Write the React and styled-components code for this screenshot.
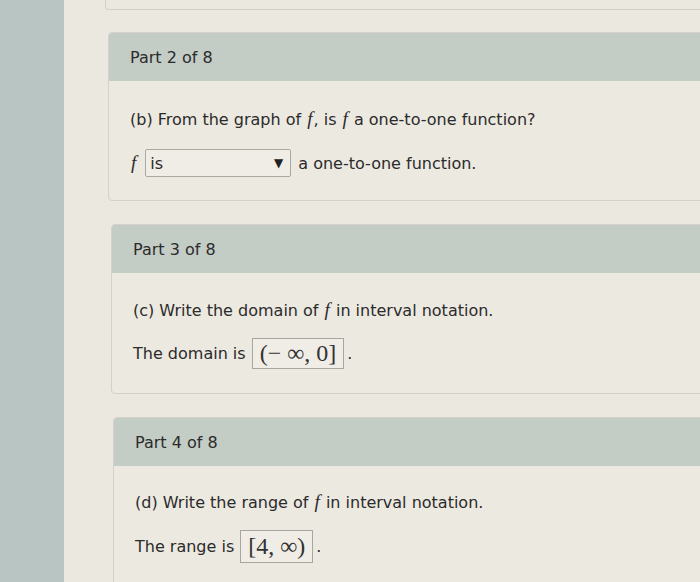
import styled, { createGlobalStyle } from "styled-components";

const Global = createGlobalStyle`
  html, body {
    margin: 0;
    padding: 0;
    background: #ebe8df;
  }
  body {
    font-family: "DejaVu Sans", Verdana, sans-serif;
    color: #2b2b2b;
  }
`;

const Page = styled.div`
  display: flex;
  width: 700px;
  height: 582px;
  overflow: hidden;
`;

const Strip = styled.div`
  width: 64px;
  flex-shrink: 0;
  background: #b8c5c3;
`;

const Main = styled.div`
  flex: 1;
  display: flex;
  flex-direction: column;
  padding-left: 44px;
  margin-right: -20px;
`;

const PrevCard = styled.div`
  flex-shrink: 0;
  height: 9px;
  border: 1px solid #d2d0c8;
  border-top: none;
  border-radius: 0 0 4px 4px;
  margin-left: -3px;
`;

const Card = styled.section`
  flex-shrink: 0;
  margin-left: ${(p) => p.$indent || 0}px;
  margin-top: ${(p) => p.$gap}px;
  border: 1px solid #d3d1ca;
  border-radius: 4px;
  background: #ece9e1;
  overflow: hidden;
`;

const Header = styled.div`
  height: 48px;
  background: #c4ccc6;
  display: flex;
  align-items: center;
  padding-left: 21px;
  font-size: 16px;
`;

const Body = styled.div`
  height: ${(p) => p.$h}px;
  padding: 0 21px;
  display: flex;
  flex-direction: column;
`;

const Question = styled.p`
  margin: ${(p) => p.$top}px 0 0;
  font-size: 16px;
  line-height: 20px;
`;

const Row = styled.div`
  margin-top: ${(p) => p.$top}px;
  display: flex;
  align-items: center;
  font-size: 16px;
`;

const F = styled.span`
  font-family: "Liberation Serif", "DejaVu Serif", serif;
  font-style: italic;
  font-size: 19px;
  padding: 0 1px;
`;

const Select = styled.div`
  width: 146px;
  height: 28px;
  box-sizing: border-box;
  border: 1px solid #a9a9a4;
  border-radius: 2px;
  background: #efede6;
  display: flex;
  align-items: center;
  justify-content: space-between;
  padding: 0 7px 0 4px;
  margin: 0 7px 0 8px;
`;

const Arrow = styled.span`
  font-size: 12px;
  color: #222;
`;

const MathBox = styled.span`
  display: inline-flex;
  align-items: center;
  height: ${(p) => p.$h}px;
  box-sizing: border-box;
  padding: 0 7px;
  margin: 0 3px 0 6px;
  border: 1px solid #a7a7a2;
  background: #efede6;
  font-family: "Liberation Serif", "DejaVu Serif", serif;
  font-size: 24px;
  color: #333;
`;

export default function App() {
  return (
    <>
      <Global />
      <Page>
        <Strip />
        <Main>
          <PrevCard />
          <Card $gap={22}>
            <Header>Part 2 of 8</Header>
            <Body $h={119}>
              <Question $top={28}>
                (b) From the graph of <F>f</F>, is <F>f</F> a one-to-one function?
              </Question>
              <Row $top={19}>
                <F>f</F>
                <Select>
                  <span>is</span>
                  <Arrow>▼</Arrow>
                </Select>
                a one-to-one function.
              </Row>
            </Body>
          </Card>
          <Card $gap={23} $indent={3}>
            <Header>Part 3 of 8</Header>
            <Body $h={120}>
              <Question $top={27}>
                (c) Write the domain of <F>f</F> in interval notation.
              </Question>
              <Row $top={17}>
                The domain is
                <MathBox $h={31}>(− ∞, 0]</MathBox>.
              </Row>
            </Body>
          </Card>
          <Card $gap={23} $indent={5}>
            <Header>Part 4 of 8</Header>
            <Body $h={140}>
              <Question $top={26}>
                (d) Write the range of <F>f</F> in interval notation.
              </Question>
              <Row $top={17}>
                The range is
                <MathBox $h={33}>[4, ∞)</MathBox>.
              </Row>
            </Body>
          </Card>
        </Main>
      </Page>
    </>
  );
}
